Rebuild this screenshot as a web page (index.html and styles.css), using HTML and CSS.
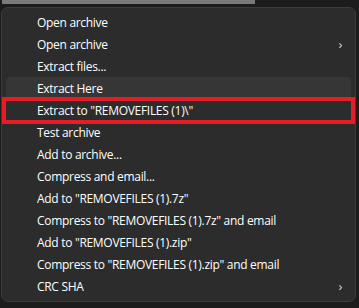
FILE: index.html
```html
<!DOCTYPE html>
<html>
<head>
<meta charset="utf-8">
<link rel="stylesheet" href="styles.css">
</head>
<body>
<div class="screen">
  <div class="topbar"></div>
  <div class="menu">
    <div class="item"><span>Open archive</span></div>
    <div class="item"><span>Open archive</span><span class="chev">&#x203A;</span></div>
    <div class="item"><span>Extract files...</span></div>
    <div class="item hover"><span>Extract Here</span></div>
    <div class="item"><span>Extract to "REMOVEFILES (1)\"</span></div>
    <div class="item"><span>Test archive</span></div>
    <div class="item"><span>Add to archive...</span></div>
    <div class="item"><span>Compress and email...</span></div>
    <div class="item"><span>Add to "REMOVEFILES (1).7z"</span></div>
    <div class="item"><span>Compress to "REMOVEFILES (1).7z" and email</span></div>
    <div class="item"><span>Add to "REMOVEFILES (1).zip"</span></div>
    <div class="item"><span>Compress to "REMOVEFILES (1).zip" and email</span></div>
    <div class="item"><span>CRC SHA</span><span class="chev">&#x203A;</span></div>
  </div>
  <div class="highlight"></div>
</div>
</body>
</html>
```
FILE: styles.css
```css
html, body {
  margin: 0;
  padding: 0;
  background: #1c1c1c;
}
.screen {
  position: relative;
  width: 359px;
  height: 308px;
  overflow: hidden;
  background: #1c1c1c;
  font-family: "Open Sans", "Noto Sans", sans-serif;
}
.topbar {
  margin-left: 2px;
  width: 253px;
  height: 4px;
  background: #7a7a7a;
}
.menu {
  margin: 3px 0 0 1px;
  width: 355px;
  box-sizing: border-box;
  height: 295px;
  background: #2c2c2c;
  border: 1px solid #3c3c3c;
  border-radius: 7px;
  padding: 3px 4px;
  display: flex;
  flex-direction: column;
}
.item {
  height: 22px;
  display: flex;
  align-items: center;
  justify-content: space-between;
  padding-left: 31px;
  padding-right: 9px;
  color: #ffffff;
  font-size: 12px;
  letter-spacing: -0.3px;
  border-radius: 4px;
}
.item.hover {
  background: #363636;
}
.chev {
  font-size: 13px;
  color: #d8d8d8;
  line-height: 1;
}
.highlight {
  position: absolute;
  left: 2px;
  top: 97px;
  width: 353px;
  height: 27px;
  box-sizing: border-box;
  border: 4px solid #e81c24;
}
```
